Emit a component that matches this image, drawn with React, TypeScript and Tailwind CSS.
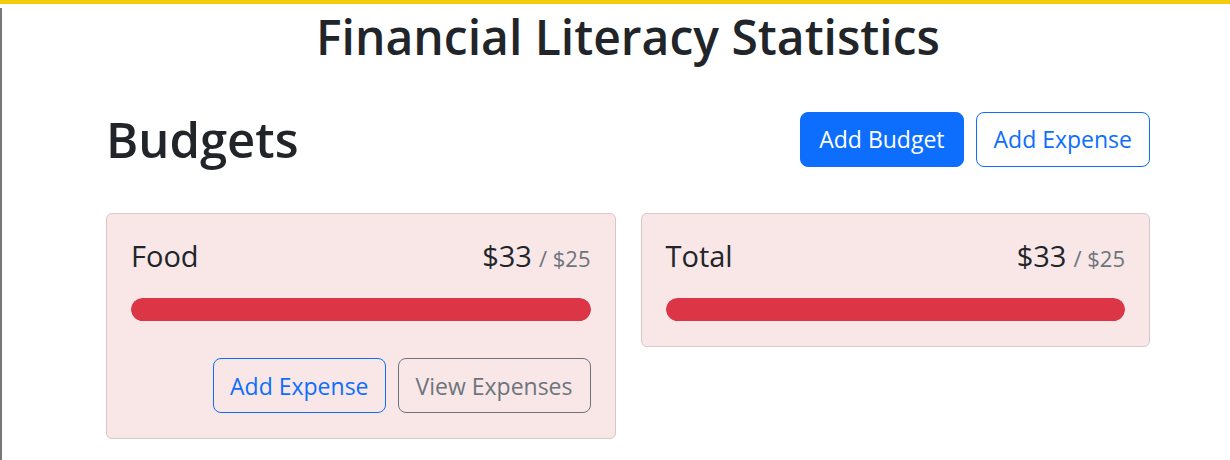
import React from 'react';

interface Budget {
  name: string;
  amount: number;
  max: number;
  showButtons: boolean;
}

const BUDGETS: Budget[] = [
  { name: 'Food', amount: 33, max: 25, showButtons: true },
  { name: 'Total', amount: 33, max: 25, showButtons: false }
];

function BudgetCard({ b }: { b: Budget }) {
  const pct = Math.min(100, (b.amount / b.max) * 100);
  return (
    <div className="rounded-[6px] border border-[#d9c7c9] bg-[#f9e7e8] px-6 pt-[25px] pb-[25px]">
      <div className="flex items-baseline justify-between text-[29px] leading-[1.2] text-[#212529]">
        <div>{b.name}</div>
        <div className="flex items-baseline">
          ${b.amount}
          <span className="ml-[7px] text-[22px] text-[#6c757d]">/ ${b.max}</span>
        </div>
      </div>
      <div className="mt-[25px] h-[23px] overflow-hidden rounded-full bg-[#e9ecef]">
        <div className="h-full rounded-full bg-[#dc3545]" style={{ width: `${pct}%` }} />
      </div>
      {b.showButtons && (
        <div className="mt-[37px] flex justify-end gap-3">
          <button className="h-[55px] rounded-[8px] border border-[#0d6efd] px-[16px] text-[23px] text-[#0d6efd]">
            Add Expense
          </button>
          <button className="h-[55px] rounded-[8px] border border-[#6c757d] px-[17px] text-[23px] text-[#6c757d]">
            View Expenses
          </button>
        </div>
      )}
    </div>
  );
}

export default function App() {
  return (
    <div className="h-[460px] overflow-hidden border-t-4 border-[#f2cc0c] bg-white font-['Open_Sans',sans-serif] text-[#212529]">
      <div className="h-full border-l-2 border-[#777777] pl-[104px] pr-[80px]">
        <h1 className="mt-[4px] text-center text-[48px] font-semibold leading-[1.2]">
          Financial Literacy Statistics
        </h1>
        <div className="mt-[46px] flex h-[55px] items-center justify-between">
          <h2 className="text-[49px] font-semibold leading-[1.2]">Budgets</h2>
          <div className="flex gap-3">
            <button className="h-[55px] rounded-[8px] border border-[#0d6efd] bg-[#0d6efd] px-[18px] text-[23px] text-white">
              Add Budget
            </button>
            <button className="h-[55px] rounded-[8px] border border-[#0d6efd] bg-white px-[17px] text-[23px] text-[#0d6efd]">
              Add Expense
            </button>
          </div>
        </div>
        <div className="mt-[46px] grid grid-cols-2 items-start gap-[25px]">
          {BUDGETS.map(b => (
            <BudgetCard key={b.name} b={b} />
          ))}
        </div>
      </div>
    </div>
  );
}
